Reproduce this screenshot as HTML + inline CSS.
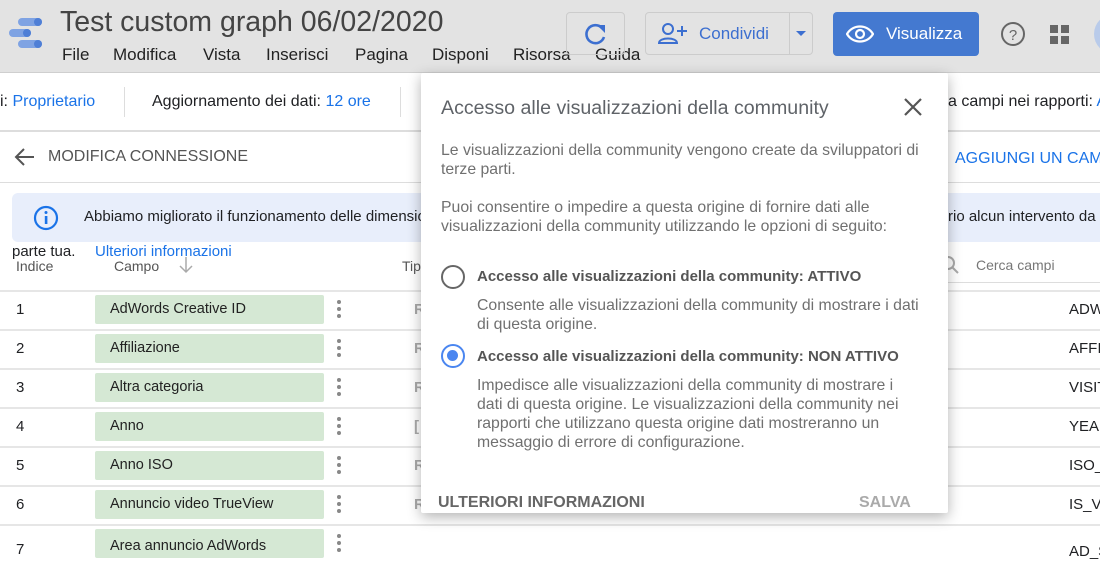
<!DOCTYPE html>
<html><head><meta charset="utf-8"><style>
*{margin:0;padding:0;box-sizing:border-box}
body{width:1100px;height:543px;overflow:hidden;position:relative;background:#fff;font-family:"Liberation Sans",Arial,sans-serif;color:#202124}
.a{position:absolute;white-space:nowrap}
.top{position:absolute;left:0;top:0;width:1100px;height:73px;background:#e3e3e3;border-bottom:1px solid #cfcfcf}
.m{position:absolute;top:45px;font-size:17px;color:#222}
.row{position:absolute;left:0;width:1100px;height:39px;border-top:2px solid #e6e6e6}
.chip{position:absolute;left:95px;top:3px;width:229px;height:29px;background:#d5e8d4;border-radius:2px;font-size:14.5px;line-height:29px;padding-left:15px;color:#222}
.num{position:absolute;left:16px;top:0;line-height:36px;font-size:15px}
.dots{position:absolute;left:337px;top:8px;width:4px}
.dots i{display:block;width:4px;height:4px;border-radius:2px;background:#888;margin-bottom:3px}
.rt{position:absolute;left:1069px;top:0;line-height:36px;font-size:15px}
.gr{position:absolute;left:414px;top:0;line-height:36px;font-size:15px;color:#aaa;font-weight:bold}
.dlg{position:absolute;left:421px;top:73px;width:527px;height:440px;background:#fff;box-shadow:0 4px 14px rgba(0,0,0,.3);border-radius:2px;color:#5f6368}
.dlg .p{position:absolute;left:20px;font-size:15.8px;line-height:19px;color:#707070}
.dlg .b{position:absolute;left:56px;font-size:15px;font-weight:bold;color:#555}
</style></head><body>
<div class="top">
 <svg class="a" style="left:8px;top:16px" width="36" height="34"><rect x="10" y="2" width="24" height="8" rx="4" fill="#7fa3e3"/><circle cx="30" cy="6" r="4" fill="#4f7fd6"/><rect x="1" y="13" width="22" height="8" rx="4" fill="#7fa3e3"/><circle cx="19" cy="17" r="4" fill="#4f7fd6"/><rect x="10" y="24" width="24" height="8" rx="4" fill="#7fa3e3"/><circle cx="30" cy="28" r="4" fill="#4f7fd6"/></svg>
 <div class="a" style="left:60px;top:6px;font-size:28.5px;color:#444">Test custom graph 06/02/2020</div>
 <div class="a m" style="left:62px">File</div>
 <div class="a m" style="left:113px">Modifica</div>
 <div class="a m" style="left:203px">Vista</div>
 <div class="a m" style="left:266px">Inserisci</div>
 <div class="a m" style="left:355px">Pagina</div>
 <div class="a m" style="left:432px">Disponi</div>
 <div class="a m" style="left:513px">Risorsa</div>
 <div class="a m" style="left:595px">Guida</div>
 <div class="a" style="left:566px;top:12px;width:59px;height:43px;border:1px solid #ccc;border-radius:4px"></div>
 <svg class="a" style="left:583px;top:22px" width="26" height="24"><path d="M19 6A9 9 0 1 0 21 15" fill="none" stroke="#3c6fd0" stroke-width="2.6"/><path d="M14 3h8v8z" fill="#3c6fd0"/></svg>
 <div class="a" style="left:645px;top:12px;width:168px;height:43px;border:1px solid #ccc;border-radius:4px"></div>
 <div class="a" style="left:789px;top:13px;width:1px;height:41px;background:#ccc"></div>
 <svg class="a" style="left:658px;top:22px" width="30" height="24"><circle cx="10" cy="7" r="5" fill="none" stroke="#3c6fd0" stroke-width="2"/><path d="M1 21c0-6 18-6 18 0z" fill="none" stroke="#3c6fd0" stroke-width="2"/><path d="M24 4v10M19 9h10" stroke="#3c6fd0" stroke-width="2"/></svg>
 <div class="a" style="left:699px;top:24px;font-size:17px;color:#3c6fd0">Condividi</div>
 <svg class="a" style="left:795px;top:30px" width="12" height="8"><path d="M1 1h10L6 6z" fill="#3c6fd0"/></svg>
 <div class="a" style="left:833px;top:12px;width:146px;height:44px;background:#4479d0;border-radius:4px"></div>
 <svg class="a" style="left:846px;top:24px" width="28" height="20"><path d="M1 10C7 0 21 0 27 10C21 20 7 20 1 10z" fill="none" stroke="#fff" stroke-width="2.2"/><circle cx="14" cy="10" r="4" fill="none" stroke="#fff" stroke-width="2.2"/></svg>
 <div class="a" style="left:886px;top:24px;font-size:17px;color:#fff">Visualizza</div>
 <svg class="a" style="left:1000px;top:21px" width="26" height="26"><circle cx="13" cy="13" r="11" fill="none" stroke="#666" stroke-width="2"/><text x="13" y="19" font-size="15" text-anchor="middle" fill="#666" font-family="Liberation Sans">?</text></svg>
 <svg class="a" style="left:1050px;top:25px" width="20" height="20"><rect x="0" y="0" width="8" height="8" fill="#666"/><rect x="11" y="0" width="8" height="8" fill="#666"/><rect x="0" y="11" width="8" height="8" fill="#666"/><rect x="11" y="11" width="8" height="8" fill="#666"/></svg>
 <div class="a" style="left:1094px;top:14px;width:40px;height:40px;border-radius:20px;background:#b9cbea"></div>
</div>
<div class="a" style="left:0;top:93px;font-size:16px"><span>i: </span><span style="color:#1a73e8">Proprietario</span></div>
<div class="a" style="left:124px;top:87px;width:1px;height:30px;background:#ddd"></div>
<div class="a" style="left:152px;top:93px;font-size:16px">Aggiornamento dei dati: <span style="color:#1a73e8">12 ore</span></div>
<div class="a" style="left:400px;top:87px;width:1px;height:30px;background:#ddd"></div>
<div class="a" style="left:948px;top:93px;font-size:16px">a campi nei rapporti: <span style="color:#1a73e8">A</span></div>
<div class="a" style="left:0;top:130px;width:1100px;height:2px;background:#ddd"></div>
<svg class="a" style="left:14px;top:147px" width="22" height="20"><path d="M20 10H3M10 2L2 10l8 8" fill="none" stroke="#555" stroke-width="2"/></svg>
<div class="a" style="left:48px;top:148px;font-size:16px;color:#555">MODIFICA CONNESSIONE</div>
<div class="a" style="left:955px;top:150px;font-size:16px;color:#1a73e8">AGGIUNGI UN CAMPO</div>
<div class="a" style="left:0;top:182px;width:1100px;height:1px;background:#ddd"></div>
<div class="a" style="left:12px;top:193px;width:1100px;height:49px;background:#e8eefb;border-radius:6px"></div>
<svg class="a" style="left:33px;top:205px" width="26" height="26"><circle cx="13" cy="13" r="11" fill="none" stroke="#1a73e8" stroke-width="2.2"/><rect x="11.8" y="11" width="2.6" height="8" fill="#1a73e8"/><circle cx="13" cy="7.5" r="1.5" fill="#1a73e8"/></svg>
<div class="a" style="left:84px;top:208px;font-size:15px">Abbiamo migliorato il funzionamento delle dimensioni</div>
<div class="a" style="left:948px;top:208px;font-size:15px">rio alcun intervento da</div>
<div class="a" style="left:12px;top:243px;font-size:15px">parte tua.</div>
<div class="a" style="left:95px;top:243px;font-size:15px;color:#1a73e8">Ulteriori informazioni</div>
<div class="a" style="left:16px;top:258px;font-size:14px;color:#555">Indice</div>
<div class="a" style="left:114px;top:258px;font-size:14px;color:#555">Campo</div>
<svg class="a" style="left:178px;top:256px" width="16" height="18"><path d="M8 1v15M2 10l6 6 6-6" fill="none" stroke="#aaa" stroke-width="1.5"/></svg>
<div class="a" style="left:402px;top:258px;font-size:14px;color:#555">Tipo</div>
<svg class="a" style="left:940px;top:255px" width="20" height="20"><circle cx="8" cy="8" r="6" fill="none" stroke="#aaa" stroke-width="2"/><path d="M12 12l6 6" stroke="#aaa" stroke-width="2"/></svg>
<div class="a" style="left:976px;top:257px;font-size:14px;color:#777">Cerca campi</div>
<div class="a" style="left:948px;top:282px;width:152px;height:1px;background:#ddd"></div>

<div class="row" style="top:290px"><div class="num">1</div><div class="chip">AdWords Creative ID</div><div class="dots"><i></i><i></i><i></i></div><div class="gr">R</div><div class="rt">ADW</div></div>
<div class="row" style="top:329px"><div class="num">2</div><div class="chip">Affiliazione</div><div class="dots"><i></i><i></i><i></i></div><div class="gr">R</div><div class="rt">AFFI</div></div>
<div class="row" style="top:368px"><div class="num">3</div><div class="chip">Altra categoria</div><div class="dots"><i></i><i></i><i></i></div><div class="gr">R</div><div class="rt">VISIT</div></div>
<div class="row" style="top:407px"><div class="num">4</div><div class="chip">Anno</div><div class="dots"><i></i><i></i><i></i></div><div class="gr">[</div><div class="rt">YEAR</div></div>
<div class="row" style="top:446px"><div class="num">5</div><div class="chip">Anno ISO</div><div class="dots"><i></i><i></i><i></i></div><div class="gr">R</div><div class="rt">ISO_Y</div></div>
<div class="row" style="top:485px"><div class="num">6</div><div class="chip">Annuncio video TrueView</div><div class="dots"><i></i><i></i><i></i></div><div class="gr">R</div><div class="rt">IS_VI</div></div>
<div class="row" style="top:524px"><div class="num" style="top:6px">7</div><div class="chip" style="line-height:34px">Area annuncio AdWords</div><div class="dots"><i></i><i></i><i></i></div><div class="rt" style="top:8px">AD_S</div></div>

<div class="dlg">
 <div class="a" style="left:20px;top:24px;font-size:19.6px;color:#5f6368">Accesso alle visualizzazioni della community</div>
 <svg class="a" style="left:483px;top:25px" width="18" height="18"><path d="M1 1l16 16M17 1L1 17" stroke="#555" stroke-width="2.2"/></svg>
 <div class="p" style="top:68px">Le visualizzazioni della community vengono create da sviluppatori di<br>terze parti.</div>
 <div class="p" style="top:125px">Puoi consentire o impedire a questa origine di fornire dati alle<br>visualizzazioni della community utilizzando le opzioni di seguito:</div>
 <div class="a" style="left:20px;top:192px;width:24px;height:24px;border:2.5px solid #666;border-radius:50%"></div>
 <div class="b" style="top:195px">Accesso alle visualizzazioni della community: ATTIVO</div>
 <div class="p" style="left:56px;top:223px">Consente alle visualizzazioni della community di mostrare i dati<br>di questa origine.</div>
 <div class="a" style="left:20px;top:271px;width:24px;height:24px;border:2.5px solid #4a86f0;border-radius:50%"><div style="position:absolute;left:4px;top:4px;width:11px;height:11px;border-radius:50%;background:#4a86f0"></div></div>
 <div class="b" style="top:275px">Accesso alle visualizzazioni della community: NON ATTIVO</div>
 <div class="p" style="left:56px;top:303px">Impedisce alle visualizzazioni della community di mostrare i<br>dati di questa origine. Le visualizzazioni della community nei<br>rapporti che utilizzano questa origine dati mostreranno un<br>messaggio di errore di configurazione.</div>
 <div class="a" style="left:17px;top:421px;font-size:16px;color:#666;font-weight:bold">ULTERIORI INFORMAZIONI</div>
 <div class="a" style="left:438px;top:421px;font-size:16px;color:#aaa;font-weight:bold">SALVA</div>
</div>
</body></html>
